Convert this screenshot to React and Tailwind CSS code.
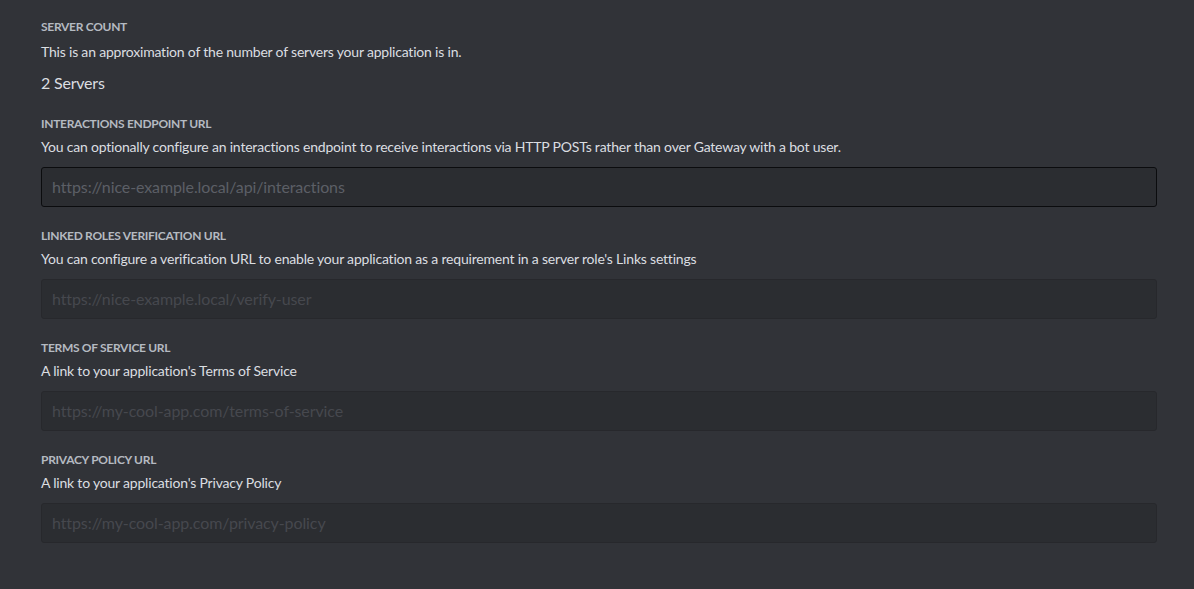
export default function App() {
  const font = { fontFamily: 'Lato, "Noto Sans", sans-serif' };
  const Section = ({ title, desc, placeholder, focused, first }) => (
    <div className={first ? "mt-[23px]" : "mt-[21px]"}>
      <div className="text-[12px] leading-4 font-bold uppercase tracking-[-0.3px] text-[#b5bac1]">{title}</div>
      <div className="mt-[5px] text-[14px] leading-5 tracking-[-0.2px] text-[#dbdee1]">{desc}</div>
      <div
        className={
          "mt-[10px] h-10 rounded-[3px] border px-[10px] flex items-center bg-[#2b2d31] text-[16px] tracking-[-0.1px] " +
          (focused ? "border-[#0b0c0e] text-[#5c5f66]" : "border-[#27282c] text-[#46484e]")
        }
      >
        {placeholder}
      </div>
    </div>
  );
  return (
    <div className="w-[1194px] h-[589px] bg-[#313338] overflow-hidden" style={font}>
      <div className="pl-[41px] pr-[37px] pt-[19px]">
        <div className="text-[12px] leading-4 font-bold uppercase tracking-[-0.3px] text-[#b5bac1]">Server Count</div>
        <div className="mt-[7px] text-[14px] leading-5 tracking-[-0.2px] text-[#dbdee1]">
          This is an approximation of the number of servers your application is in.
        </div>
        <div className="mt-[11px] text-[16px] leading-5 tracking-[-0.2px] text-[#dbdee1]">2 Servers</div>
        <Section
          first
          title="Interactions Endpoint URL"
          desc="You can optionally configure an interactions endpoint to receive interactions via HTTP POSTs rather than over Gateway with a bot user."
          placeholder="https://nice-example.local/api/interactions"
          focused
        />
        <Section
          title="Linked Roles Verification URL"
          desc="You can configure a verification URL to enable your application as a requirement in a server role's Links settings"
          placeholder="https://nice-example.local/verify-user"
        />
        <Section
          title="Terms of Service URL"
          desc="A link to your application's Terms of Service"
          placeholder="https://my-cool-app.com/terms-of-service"
        />
        <Section
          title="Privacy Policy URL"
          desc="A link to your application's Privacy Policy"
          placeholder="https://my-cool-app.com/privacy-policy"
        />
      </div>
    </div>
  );
}
